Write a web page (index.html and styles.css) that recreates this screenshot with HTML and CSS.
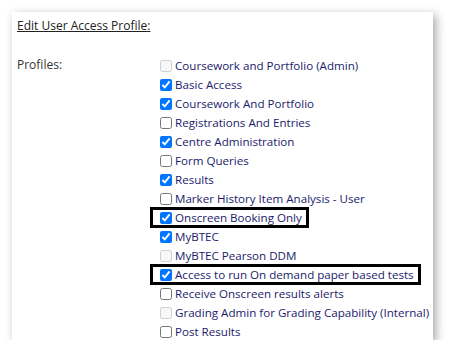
FILE: index.html
```html
<!DOCTYPE html>
<html lang="en">
<head>
  <meta charset="UTF-8">
  <meta name="viewport" content="width=device-width, initial-scale=1.0">
  <title>Edit User Access Profile</title>
  <link rel="stylesheet" href="styles.css">
</head>
<body>
  <div class="card">
    <h2 class="title">Edit User Access Profile:</h2>

    <div class="profileRow">
      <div class="fieldLabel">Profiles:</div>
      <div class="profileList">
        <div class="item"><label><input type="checkbox" disabled>Coursework and Portfolio (Admin)</label></div>
        <div class="item"><label><input type="checkbox" checked>Basic Access</label></div>
        <div class="item"><label><input type="checkbox" checked>Coursework And Portfolio</label></div>
        <div class="item"><label><input type="checkbox">Registrations And Entries</label></div>
        <div class="item"><label><input type="checkbox" checked>Centre Administration</label></div>
        <div class="item"><label><input type="checkbox">Form Queries</label></div>
        <div class="item"><label><input type="checkbox" checked>Results</label></div>
        <div class="item"><label><input type="checkbox">Marker History Item Analysis - User</label></div>
        <div class="item marked"><label><input type="checkbox" checked>Onscreen Booking Only</label></div>
        <div class="item"><label><input type="checkbox" checked>MyBTEC</label></div>
        <div class="item"><label><input type="checkbox" disabled>MyBTEC Pearson DDM</label></div>
        <div class="item marked"><label><input type="checkbox" checked>Access to run On demand paper based tests</label></div>
        <div class="item"><label><input type="checkbox">Receive Onscreen results alerts</label></div>
        <div class="item"><label><input type="checkbox" disabled>Grading Admin for Grading Capability (Internal)</label></div>
        <div class="item"><label><input type="checkbox">Post Results</label></div>
      </div>
    </div>
  </div>
</body>
</html>
```

FILE: styles.css
```css
* {
  box-sizing: border-box;
}

body {
  margin: 0;
  background: #fff;
  font-family: 'Open Sans', sans-serif;
  font-size: 12px;
  color: #333;
}

/* White panel with a soft drop shadow */
.card {
  margin: 12px 0 0 12px;
  width: 421px;
  height: 328px;
  padding: 5px 5px 0 5px;
  background: #fff;
  box-shadow: 3px 3px 9px rgba(0, 0, 0, 0.35);
}

.title {
  margin: 0;
  font-size: 12px;
  font-weight: normal;
  text-decoration: underline;
  color: #222;
  line-height: 17px;
}

.profileRow {
  display: flex;
  margin-top: 21px;
}

.fieldLabel {
  width: 143px;
  flex-shrink: 0;
  line-height: 19px;
  color: #333;
}

.profileList {
  padding-top: 1px;
}

.item {
  height: 19px;
  display: flex;
  align-items: center;
}

.item label {
  display: inline-flex;
  align-items: center;
  height: 15px;
  font-size: 11.6px;
  color: #1b1b6b;
  white-space: nowrap;
}

.item input {
  width: 12px;
  height: 12px;
  margin: 0 3px 0 0;
}

/* Black frame drawn round the rows that matter */
.item.marked label {
  margin-left: -7px;
  padding: 0 4px 0 7px;
  outline: 3px solid #000;
}
```
